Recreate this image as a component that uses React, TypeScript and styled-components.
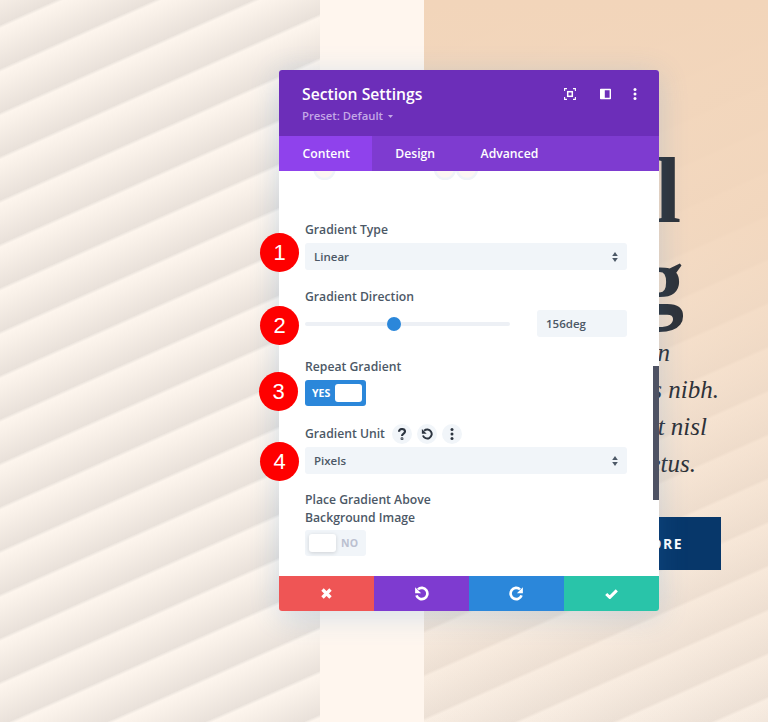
import React from "react";
import styled, { createGlobalStyle } from "styled-components";

const GlobalStyle = createGlobalStyle`
  html, body {
    margin: 0;
    padding: 0;
    background: #fff6ee;
  }
  * {
    box-sizing: border-box;
  }
`;

const Page = styled.div`
  position: relative;
  display: flex;
  width: 768px;
  height: 722px;
  overflow: hidden;
  font-family: "Open Sans", "Liberation Sans", sans-serif;
`;
const StripedColumn = styled.div`
  width: 320px;
  background: repeating-linear-gradient(156deg, #ebe4dd -17px, #fdf5ed -14px, #f8f0e8 -4px, #e9e1da 23px);
`;
const PlainColumn = styled.div`
  width: 104px;
  background: #fff6ee;
`;
const HeroColumn = styled.div`
  flex: 1;
  display: flex;
  flex-direction: column;
  align-items: flex-end;
  background:
    linear-gradient(
      180deg,
      rgba(242, 213, 186, 1) 0%,
      rgba(242, 213, 186, 0.88) 30%,
      rgba(242, 213, 186, 0.5) 55%,
      rgba(242, 213, 186, 0.05) 100%
    ),
    repeating-linear-gradient(156deg, #ede2d8 -24px, #f9efe5 -21px, #ece1d7 16px);
`;
const Heading = styled.div<{ $inset: number; $top: number }>`
  margin: ${p => p.$top}px ${p => p.$inset}px 0 0;
  font-family: "Liberation Serif", serif;
  font-weight: 700;
  font-size: 94px;
  line-height: 90px;
  color: #2f3238;
`;
const CopyBlock = styled.div`
  display: flex;
  flex-direction: column;
  align-items: flex-end;
  margin-top: 9px;
  width: 100%;
`;
const Copy = styled.div<{ $inset: number }>`
  margin-right: ${p => p.$inset}px;
  font-family: "Liberation Serif", serif;
  font-style: italic;
  font-size: 25px;
  line-height: 37px;
  color: #2f3238;
`;
const HeroButton = styled.div`
  width: 297px;
  height: 53px;
  margin: 35px 47px 0 0;
  padding-right: 38px;
  display: flex;
  align-items: center;
  justify-content: flex-end;
  background: #07376a;
  color: #fff;
  font-size: 14px;
  font-weight: 700;
  letter-spacing: 1.5px;
`;

const Modal = styled.div`
  position: absolute;
  left: 279px;
  top: 70px;
  width: 380px;
  height: 541px;
  display: flex;
  flex-direction: column;
  border-radius: 3px;
  background: #fff;
  box-shadow: 0 5px 30px rgba(43, 135, 218, 0.2);
`;
const Header = styled.div`
  height: 66px;
  flex: none;
  display: flex;
  justify-content: space-between;
  padding: 13px 22px 0 23px;
  background: #6c2eb9;
  border-radius: 3px 3px 0 0;
`;
const Title = styled.div`
  font-size: 15.7px;
  font-weight: 600;
  line-height: 22px;
  color: #fff;
`;
const Preset = styled.div`
  display: flex;
  align-items: center;
  gap: 5px;
  margin-top: 3px;
  font-size: 11.3px;
  font-weight: 600;
  line-height: 16px;
  color: #c4a8e6;
`;
const HeaderIcons = styled.div`
  display: flex;
  gap: 22px;
  align-items: flex-start;
  padding-top: 5px;
`;
const FocusGlyph = styled.svg`
  margin-right: 2px;
`;
const Tabs = styled.div`
  height: 35px;
  flex: none;
  display: flex;
  background: #7e3bd0;
`;
const Tab = styled.div<{ $active?: boolean }>`
  padding: 0 22px 0 23.5px;
  display: flex;
  align-items: center;
  font-size: 12.2px;
  font-weight: 600;
  color: #fff;
  background: ${p => (p.$active ? "#8f42ec" : "transparent")};
`;
const Body = styled.div`
  position: relative;
  flex: 1;
  padding: 0 32px 0 26px;
  background: #fff;
`;
const Remnant = styled.svg`
  display: block;
  margin: 0 0 41px -26px;
`;
const Field = styled.div<{ $gap?: number }>`
  margin-bottom: ${p => p.$gap ?? 18}px;
`;
const Label = styled.div`
  font-size: 12.2px;
  font-weight: 600;
  line-height: 18px;
  color: #4c5866;
`;
const LabelRow = styled.div`
  display: flex;
  align-items: center;
  gap: 5px;
  height: 18px;
`;
const HelpButton = styled.div`
  width: 20px;
  height: 20px;
  display: flex;
  align-items: center;
  justify-content: center;
  border-radius: 50%;
  background: #f1f5f9;
`;
const LabelIcons = styled.div`
  display: flex;
  gap: 5px;
  margin-left: 2px;
`;
const Select = styled.div`
  height: 27px;
  margin-top: 4px;
  padding: 0 9px;
  display: flex;
  align-items: center;
  justify-content: space-between;
  border-radius: 3px;
  background: #f1f5f9;
  font-size: 11.5px;
  font-weight: 600;
  color: #4c5866;
`;
const SliderRow = styled.div`
  display: flex;
  align-items: center;
  justify-content: space-between;
  margin-top: 4px;
`;
const Track = styled.div`
  position: relative;
  width: 205px;
  height: 4px;
  margin-top: 1px;
  border-radius: 2px;
  background: #edf0f5;
`;
const Knob = styled.div`
  position: absolute;
  left: 82px;
  top: -5px;
  width: 14px;
  height: 14px;
  border-radius: 50%;
  background: #2b87da;
`;
const NumberBox = styled(Select)`
  width: 90px;
  margin-top: 0;
`;
const Toggle = styled.div<{ $on?: boolean; $top: number }>`
  width: 61px;
  height: 26px;
  margin-top: ${p => p.$top}px;
  padding: 4px;
  display: flex;
  flex-direction: ${p => (p.$on ? "row" : "row-reverse")};
  justify-content: space-between;
  align-items: center;
  border-radius: 3px;
  background: ${p => (p.$on ? "#2b87da" : "#f1f5f9")};
  color: ${p => (p.$on ? "#fff" : "#bbc0d0")};
  font-size: 10.5px;
  font-weight: 700;
`;
const ToggleText = styled.span`
  padding: 0 4px 0 3px;
`;
const ToggleKnob = styled.div<{ $on?: boolean }>`
  width: 27px;
  height: 18px;
  border-radius: 3px;
  background: #fff;
  box-shadow: ${p => (p.$on ? "none" : "0 1px 4px rgba(0, 0, 0, 0.15)")};
`;
const Scrollbar = styled.div`
  position: absolute;
  right: 0;
  top: 195px;
  width: 6px;
  height: 134px;
  background: #4e5263;
`;
const Footer = styled.div`
  height: 35px;
  flex: none;
  display: grid;
  grid-template-columns: repeat(4, 1fr);
  border-radius: 0 0 3px 3px;
  overflow: hidden;
`;
const FooterButton = styled.div<{ $color: string }>`
  display: flex;
  align-items: center;
  justify-content: center;
  background: ${p => p.$color};
`;
const Badge = styled.div<{ $top: number; $left: number }>`
  position: absolute;
  left: ${p => p.$left}px;
  top: ${p => p.$top}px;
  width: 39px;
  height: 39px;
  display: flex;
  align-items: center;
  justify-content: center;
  border-radius: 50%;
  background: #fe0000;
  color: #fff;
  font-family: "Liberation Sans", sans-serif;
  font-size: 22px;
  line-height: 1;
`;

const UndoIcon = ({ size, color, width }: { size: number; color: string; width: number }) => (
  <svg width={size} height={size} viewBox="0 0 16 16" fill="none">
    <path d="M4.2 3.6A6 6 0 1 1 2.6 10" stroke={color} strokeWidth={width} />
    <path d="M1.200 1.200v6.400h6.400z" fill={color} />
  </svg>
);

const RedoIcon = ({ size, color, width }: { size: number; color: string; width: number }) => (
  <svg width={size} height={size} viewBox="0 0 16 16" fill="none">
    <path d="M11.8 3.6A6 6 0 1 0 13.4 10" stroke={color} strokeWidth={width} />
    <path d="M14.800 1.200v6.400H8.400z" fill={color} />
  </svg>
);

const DotsIcon = ({ color, height }: { color: string; height: number }) => (
  <svg width="4" height={height} viewBox="0 0 4 12" fill={color}>
    <circle cx="2" cy="1.500" r="1.500" />
    <circle cx="2" cy="6" r="1.500" />
    <circle cx="2" cy="10.500" r="1.500" />
  </svg>
);

const SelectArrows = () => (
  <svg width="6" height="10" viewBox="0 0 6 10" fill="#4c5866">
    <path d="M3 0l2.800 4H.2z" />
    <path d="M3 10L.2 6h5.600z" />
  </svg>
);

export default function App() {
  return (
    <Page>
      <GlobalStyle />
      <StripedColumn />
      <PlainColumn />
      <HeroColumn>
        <Heading $top={145} $inset={87}>l</Heading>
        <Heading $top={0} $inset={84}>g</Heading>
        <CopyBlock>
          <Copy $inset={98}>n</Copy>
          <Copy $inset={49}>s nibh.</Copy>
          <Copy $inset={61}>t nisl</Copy>
          <Copy $inset={72}>etus.</Copy>
        </CopyBlock>
        <HeroButton>ORE</HeroButton>
      </HeroColumn>

      <Modal>
        <Header>
          <div>
            <Title>Section Settings</Title>
            <Preset>
              Preset: Default
              <svg width="5" height="3" viewBox="0 0 5 3" fill="#c4a8e6">
                <path d="M0 0h5L2.500 3z" />
              </svg>
            </Preset>
          </div>
          <HeaderIcons>
            <FocusGlyph width="12" height="12" viewBox="0 0 12 12" fill="none" stroke="#fff" strokeWidth="1.100">
              <path d="M0.600 3V0.600H3M9 0.600h2.400V3M11.400 9v2.400H9M3 11.400H.6V9" />
              <rect x="3.700" y="3.700" width="4.600" height="4.600" strokeWidth="1.500" />
            </FocusGlyph>
            <svg width="11" height="12" viewBox="0 0 11 12">
              <path
                fillRule="evenodd"
                fill="#fff"
                d="M.8.800h9.400a.8.8 0 0 1 .8.8v8.800a.8.8 0 0 1-.8.8H.8a.8.8 0 0 1-.8-.8V1.600a.8.8 0 0 1 .8-.8zM4.800 2.200v7.600h4.800V2.200z"
              />
            </svg>
            <DotsIcon color="#fff" height={12} />
          </HeaderIcons>
        </Header>
        <Tabs>
          <Tab $active>Content</Tab>
          <Tab>Design</Tab>
          <Tab>Advanced</Tab>
        </Tabs>
        <Body>
          <Remnant width="380" height="9" viewBox="0 0 380 9" fill="#fdf7f3" stroke="#f0f4f8" strokeWidth="2.500">
            <circle cx="45.500" cy="-2" r="10" />
            <circle cx="166" cy="-2" r="10" />
            <circle cx="188" cy="-2" r="10" />
          </Remnant>
          <Field>
            <Label>Gradient Type</Label>
            <Select>
              Linear
              <SelectArrows />
            </Select>
          </Field>
          <Field $gap={21}>
            <Label>Gradient Direction</Label>
            <SliderRow>
              <Track>
                <Knob />
              </Track>
              <NumberBox>156deg</NumberBox>
            </SliderRow>
          </Field>
          <Field $gap={19}>
            <Label>Repeat Gradient</Label>
            <Toggle $on $top={4}>
              <ToggleText>YES</ToggleText>
              <ToggleKnob $on />
            </Toggle>
          </Field>
          <Field $gap={17}>
            <LabelRow>
              <Label>Gradient Unit</Label>
              <LabelIcons>
                <HelpButton>
                  <svg width="8" height="12" viewBox="0 0 8 12" fill="none" stroke="#2d3540" strokeWidth="2.100">
                    <path d="M1 3.800C1 2 2.200 1 4 1s3 1 3 2.600C7 5.600 4 5.600 4 8" />
                    <circle cx="4" cy="10.800" r="0.400" />
                  </svg>
                </HelpButton>
                <HelpButton>
                  <UndoIcon size={12} color="#2d3540" width={2.600} />
                </HelpButton>
                <HelpButton>
                  <DotsIcon color="#2d3540" height={12} />
                </HelpButton>
              </LabelIcons>
            </LabelRow>
            <Select>
              Pixels
              <SelectArrows />
            </Select>
          </Field>
          <Field>
            <Label>
              Place Gradient Above
              <br />
              Background Image
            </Label>
            <Toggle $top={3}>
              <ToggleText>NO</ToggleText>
              <ToggleKnob />
            </Toggle>
          </Field>
          <Scrollbar />
        </Body>
        <Footer>
          <FooterButton $color="#ef5555">
            <svg width="11" height="11" viewBox="0 0 11 11" stroke="#fff" strokeWidth="3.400">
              <path d="M1.500 1.500l8 8M9.500 1.500l-8 8" />
            </svg>
          </FooterButton>
          <FooterButton $color="#7e3bd0">
            <UndoIcon size={15} color="#fff" width={2.800} />
          </FooterButton>
          <FooterButton $color="#2b87da">
            <RedoIcon size={15} color="#fff" width={2.800} />
          </FooterButton>
          <FooterButton $color="#29c4a9">
            <svg width="13" height="10" viewBox="0 0 13 10" fill="none" stroke="#fff" strokeWidth="3">
              <path d="M1.200 5l3.600 3.400 7-7" />
            </svg>
          </FooterButton>
        </Footer>
      </Modal>

      <Badge $left={260} $top={233}>1</Badge>
      <Badge $left={260} $top={306}>2</Badge>
      <Badge $left={259} $top={372}>3</Badge>
      <Badge $left={260} $top={442}>4</Badge>
    </Page>
  );
}
